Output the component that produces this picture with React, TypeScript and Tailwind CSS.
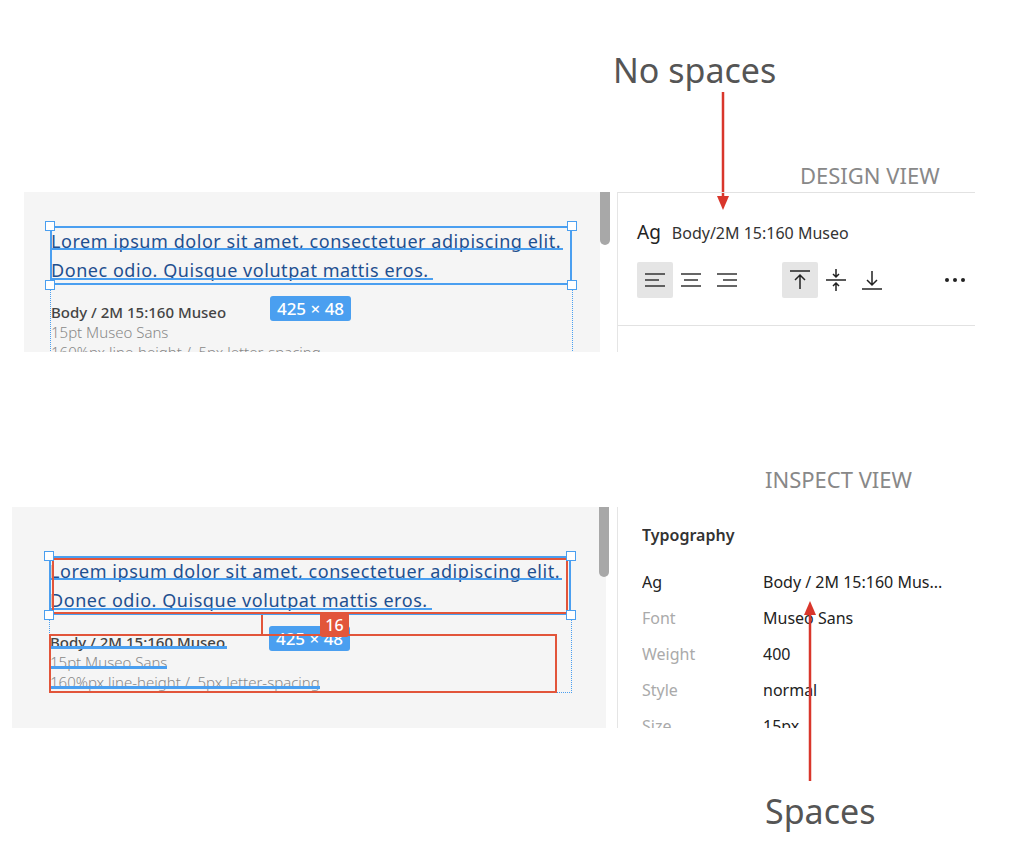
import React from "react";

const H = ({ x, y }: { x: number; y: number }) => (
  <div className="absolute w-[10px] h-[10px] bg-white border border-[#4a9ff0]" style={{ left: x - 5, top: y - 5 }} />
);

function Canvas({ ox, oy, inspect }: { ox: number; oy: number; inspect?: boolean }) {
  const L = ox, T = oy, R = ox + 522, B = oy + 59;
  return (
    <>
      <div className="absolute border-l border-r border-dotted border-[#4a9ff0] border-b" style={{ left: L, top: B, width: R - L + 1, height: inspect ? 78 : 80, borderBottomStyle: inspect ? "dotted" : "none" }} />
      <div className="absolute border-2 border-[#4a9ff0]" style={{ left: L, top: T, width: R - L, height: B - T }} />
      <div className="absolute font-['Open_Sans',sans-serif] text-[18px] leading-[29px] text-[#1f4f8f] tracking-[0.55px]" style={{ left: L + 1, top: T + 1 }}>
        <div className="relative w-fit whitespace-nowrap">Lorem ipsum dolor sit amet, consectetuer adipiscing elit.<div className="absolute left-0 right-[-2px] top-[21px] h-[2px] bg-[#4a9ff0]" /></div>
        <div className="relative w-fit whitespace-nowrap">Donec odio. Quisque volutpat mattis eros.<div className="absolute left-0 right-[-4px] top-[22px] h-[2px] bg-[#4a9ff0]" /></div>
      </div>
      {inspect && <div className="absolute border-2 border-[#e2553a]" style={{ left: L + 3, top: T + 2, width: 516, height: 56 }} />}
      <H x={L} y={T} /><H x={R} y={T} /><H x={L} y={B} /><H x={R} y={B} />
      <div className="absolute font-['Roboto',sans-serif] whitespace-nowrap" style={{ left: L + 1, top: B + 17 }}>
        <div className="relative w-fit text-[15px] leading-[20px] text-[#444] font-medium">Body / 2M 15:160 Museo{inspect && <div className="absolute left-0 right-[-2px] top-[14px] h-[3px] bg-[#4a9ff0]" />}</div>
        <div className="relative w-fit text-[15px] leading-[20px] text-[#888] font-light">15pt Museo Sans{inspect && <div className="absolute left-0 right-0 top-[14px] h-[3px] bg-[#4a9ff0]" />}</div>
        <div className="relative w-fit text-[15px] leading-[20px] text-[#888] font-light">160%px line-height / .5px letter-spacing{inspect && <div className="absolute left-0 right-0 top-[14px] h-[3px] bg-[#4a9ff0]" />}</div>
      </div>
      <div className="absolute bg-[#4a9ff0] text-white rounded-[3px] text-[17px] font-medium font-['Roboto',sans-serif] flex items-center justify-center" style={{ left: L + 220, top: B + 11, width: 81, height: 25 }}>425 × 48</div>
      {inspect && (
        <>
          <div className="absolute border-2 border-[#e2553a]" style={{ left: L, top: B + 19, width: 508, height: 59 }} />
          <div className="absolute w-[2px] bg-[#e2553a]" style={{ left: 261, top: B, height: 20 }} />
          <div className="absolute bg-[#e2553a] text-white rounded-[3px] text-[16px] font-medium font-['Roboto',sans-serif] flex items-center justify-center" style={{ left: 320, top: 612, width: 29, height: 25 }}>16</div>
        </>
      )}
    </>
  );
}

const Align = ({ type }: { type: "l" | "c" | "r" }) => {
  const lines = type === "l" ? [[0, 20], [0, 14], [0, 20]] : type === "c" ? [[0, 20], [3, 17], [0, 20]] : [[0, 20], [6, 20], [0, 20]];
  return (
    <svg width="22" height="16" viewBox="0 0 20 16">
      {lines.map(([a, b], i) => <line key={i} x1={a} x2={b} y1={2 + i * 6} y2={2 + i * 6} stroke="#333" strokeWidth="1.5" />)}
    </svg>
  );
};

export default function App() {
  return (
    <div className="relative w-[1024px] h-[864px] bg-white overflow-hidden font-['Liberation_Sans',sans-serif]">
      <div className="absolute left-[613px] top-[45px] text-[34px] text-[#555]">No spaces</div>
      <svg className="absolute left-[715px] top-[92px]" width="16" height="120"><line x1="8" y1="0" x2="8" y2="106" stroke="#d9362b" strokeWidth="2.5" /><polygon points="2,104 14,104 8,118" fill="#d9362b" /></svg>
      <div className="absolute left-[800px] top-[159px] text-[22px] text-[#888]">DESIGN VIEW</div>

      <div className="absolute left-[24px] top-[192px] w-[576px] h-[160px] bg-[#f5f5f5]" />
      <div className="absolute left-[600px] top-[192px] w-[10px] h-[53px] bg-[#a8a8a8] rounded-b-[5px]" />
      <div className="absolute left-[617px] top-[192px] w-px h-[160px] bg-[#e5e5e5]" />
      <div className="absolute left-[618px] top-[192px] w-[357px] h-[134px] border-t border-b border-[#e2e2e2] pt-[25px] pl-[19px] flex flex-col">
        <div className="flex items-baseline gap-[11px] font-['Inter',sans-serif] text-[#222]">
          <span className="text-[19px]">Ag</span><span className="text-[16px] text-[#333]">Body/2M 15:160 Museo</span>
        </div>
        <div className="mt-[15px] flex items-center">
          <div className="w-[36px] h-[36px] bg-[#e5e5e5] rounded-[2px] flex items-center justify-center"><Align type="l" /></div>
          <div className="w-[36px] h-[36px] flex items-center justify-center"><Align type="c" /></div>
          <div className="w-[36px] h-[36px] flex items-center justify-center"><Align type="r" /></div>
          <div className="w-[36px] ml-[37px] h-[36px] bg-[#e5e5e5] rounded-[2px] flex items-center justify-center">
            <svg width="22" height="22" viewBox="0 0 22 22"><line x1="1" y1="2" x2="21" y2="2" stroke="#222" strokeWidth="1.5" /><path d="M11 20V6M6 11l5-5 5 5" fill="none" stroke="#222" strokeWidth="1.5" /></svg>
          </div>
          <div className="w-[36px] h-[36px] flex items-center justify-center">
            <svg width="22" height="24" viewBox="0 0 22 24"><line x1="1" y1="12" x2="21" y2="12" stroke="#222" strokeWidth="1.5" /><path d="M11 1v8M8 6l3 3 3-3M11 23v-8M8 18l3-3 3 3" fill="none" stroke="#222" strokeWidth="1.5" /></svg>
          </div>
          <div className="w-[36px] h-[36px] flex items-center justify-center">
            <svg width="22" height="22" viewBox="0 0 22 22"><line x1="1" y1="20" x2="21" y2="20" stroke="#222" strokeWidth="1.5" /><path d="M11 2v14M6 11l5 5 5-5" fill="none" stroke="#222" strokeWidth="1.5" /></svg>
          </div>
          <div className="ml-[55px] flex gap-[4px]"><span className="w-[4px] h-[4px] rounded-full bg-[#222]" /><span className="w-[4px] h-[4px] rounded-full bg-[#222]" /><span className="w-[4px] h-[4px] rounded-full bg-[#222]" /></div>
        </div>
      </div>
      <div className="absolute left-0 top-0 w-[600px] h-[352px] overflow-hidden"><Canvas ox={50} oy={226} /></div>

      <div className="absolute left-[765px] top-[463px] text-[22px] text-[#888]">INSPECT VIEW</div>
      <div className="absolute left-[12px] top-[507px] w-[594px] h-[221px] bg-[#f5f5f5]" />
      <div className="absolute left-[599px] top-[507px] w-[10px] h-[70px] bg-[#a8a8a8] rounded-b-[5px]" />
      <div className="absolute left-[617px] top-[507px] w-px h-[221px] bg-[#e5e5e5]" />
      <div className="absolute left-0 top-[507px] w-[600px] h-[221px] overflow-hidden">
        <div className="relative -top-[507px]"><Canvas ox={49} oy={556} inspect /></div>
      </div>
      <div className="absolute left-[642px] top-[525px] w-[340px] h-[203px] overflow-hidden font-['Inter',sans-serif] text-[16px]">
        <div className="font-semibold text-[#333] leading-[20px]">Typography</div>
        <div className="mt-[19px] flex flex-col">
          {[["Ag", "Body / 2M 15:160 Mus..."], ["Font", "Museo Sans"], ["Weight", "400"], ["Style", "normal"], ["Size", "15px"]].map(([k, v], i) => (
            <div key={k} className="flex h-[36px] items-center">
              <span className={`w-[121px] ${i === 0 ? "text-[#222]" : "text-[#aaa]"}`}>{k}</span>
              <span className="text-[#222]">{v}</span>
            </div>
          ))}
        </div>
      </div>
      <svg className="absolute left-[802px] top-[601px]" width="16" height="180"><polygon points="2,14 14,14 8,0" fill="#d9362b" /><line x1="8" y1="12" x2="8" y2="180" stroke="#d9362b" strokeWidth="2.5" /></svg>
      <div className="absolute left-[765px] top-[786px] text-[34px] text-[#555]">Spaces</div>
    </div>
  );
}
